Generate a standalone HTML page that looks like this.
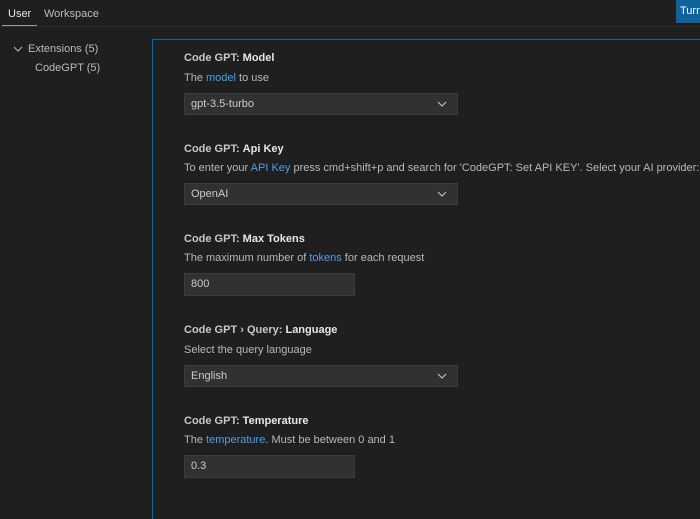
<!DOCTYPE html>
<html><head><style>
html,body{margin:0;width:700px;height:519px;overflow:hidden}
body{background:#1f1f1f;font-family:"Liberation Sans",sans-serif;position:relative;color:#ccc;font-size:11px}
.a{position:absolute;white-space:nowrap}
.t{font-weight:bold;color:#c8c8c8;font-size:11px}
.t b{color:#e7e7e7}
.d{color:#b8b8b8;font-size:11px}
.d span{color:#4aa1e8}
.box{position:absolute;background:#313131;border:1px solid #3c3c3c;box-sizing:border-box;height:22px;color:#ccc;font-size:11px;line-height:20px;padding-left:6px}
.chev{position:absolute;right:9px;top:4px}
</style></head><body>
<div class="a" style="left:8px;top:8px;color:#e7e7e7">User</div>
<div class="a" style="left:44px;top:8px;color:#bbb">Workspace</div>
<div class="a" style="left:2px;top:25px;width:35px;height:2px;background:#9a9a9a"></div>
<div class="a" style="left:0;top:26px;width:700px;height:1px;background:#2e2e2e"></div>
<div class="a" style="left:676px;top:0;width:24px;height:23px;background:#0e639c;color:#fff;line-height:22px;padding-left:4px;box-sizing:border-box">Turn</div>
<svg class="a" style="left:13px;top:45px" width="10" height="8"><path d="M1 2l4 4 4-4" stroke="#bbb" fill="none"/></svg>
<div class="a" style="left:28px;top:43px;color:#bbb">Extensions (5)</div>
<div class="a" style="left:35px;top:62px;color:#bbb">CodeGPT (5)</div>
<div class="a" style="left:152px;top:39px;width:560px;height:490px;border-left:1px solid #0e639c;border-top:1px solid #0e639c"></div>

<div class="a t" style="left:184px;top:52px">Code GPT: <b>Model</b></div>
<div class="a d" style="left:184px;top:72px">The <span>model</span> to use</div>
<div class="box" style="left:184px;top:93px;width:274px">gpt-3.5-turbo<svg class="chev" width="12" height="12"><path d="M2 4l4 4 4-4" stroke="#ccc" fill="none"/></svg></div>

<div class="a t" style="left:184px;top:143px">Code GPT: <b>Api Key</b></div>
<div class="a d" style="left:184px;top:162px">To enter your <span>API Key</span> press cmd+shift+p and search for 'CodeGPT: Set API KEY'. Select your AI provider:</div>
<div class="box" style="left:184px;top:183px;width:274px">OpenAI<svg class="chev" width="12" height="12"><path d="M2 4l4 4 4-4" stroke="#ccc" fill="none"/></svg></div>

<div class="a t" style="left:184px;top:233px">Code GPT: <b>Max Tokens</b></div>
<div class="a d" style="left:184px;top:252px">The maximum number of <span>tokens</span> for each request</div>
<div class="box" style="left:184px;top:273px;width:171px;height:23px">800</div>

<div class="a t" style="left:184px;top:324px">Code GPT › Query: <b>Language</b></div>
<div class="a d" style="left:184px;top:344px">Select the query language</div>
<div class="box" style="left:184px;top:365px;width:274px">English<svg class="chev" width="12" height="12"><path d="M2 4l4 4 4-4" stroke="#ccc" fill="none"/></svg></div>

<div class="a t" style="left:184px;top:415px">Code GPT: <b>Temperature</b></div>
<div class="a d" style="left:184px;top:434px">The <span>temperature</span>. Must be between 0 and 1</div>
<div class="box" style="left:184px;top:455px;width:171px;height:23px">0.3</div>
</body></html>
